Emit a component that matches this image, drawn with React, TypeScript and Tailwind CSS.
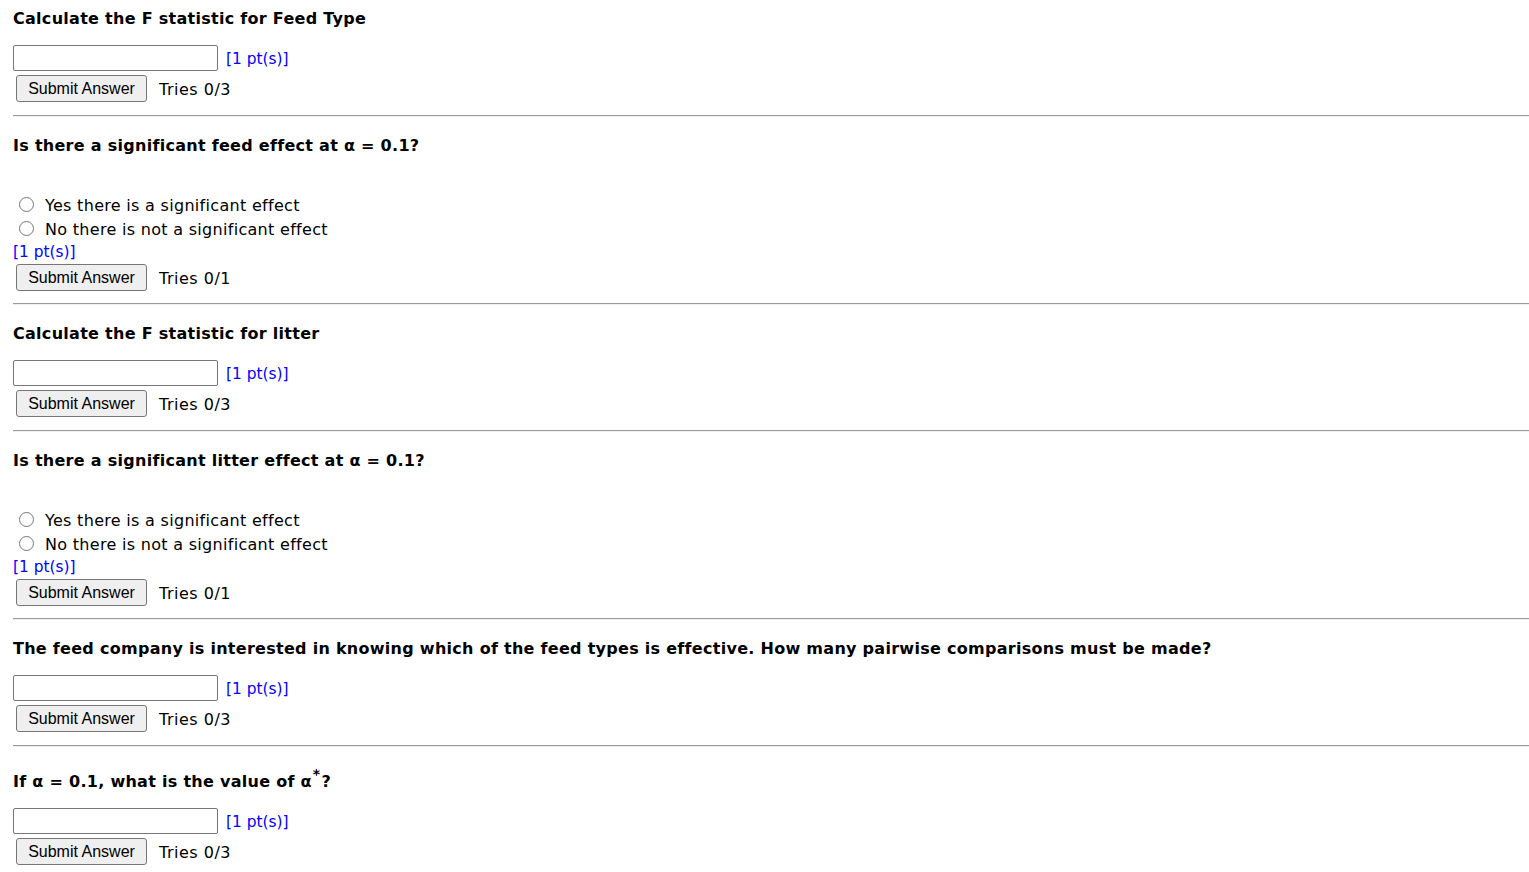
import React from "react";

const font = { fontFamily: '"DejaVu Sans", Verdana, sans-serif' };

function Hr() {
  return <div className="h-[2px] border-t border-b border-t-[#9a9a9a] border-b-[#eeeeee] w-full" />;
}

function Pts({ className = "" }: { className?: string }) {
  return <span className={"relative top-[2px] text-[#0000ff] text-[15.4px] " + className}>[1 pt(s)]</span>;
}

function SubmitRow({ tries, className = "" }: { tries: string; className?: string }) {
  return (
    <div className={"flex items-center h-[27px] " + className}>
      <button
        className="ml-[3px] w-[131px] h-[27px] bg-[#efefef] border border-[#767676] rounded-[3px] text-[16px] text-black flex items-center justify-center"
        style={{ fontFamily: '"Liberation Sans", Arial, sans-serif' }}
      >
        Submit Answer
      </button>
      <span className="relative top-[1px] ml-[12px] text-[16px] tracking-[0.5px] text-black">Tries {tries}</span>
    </div>
  );
}

function InputSection({ title, first = false, mt = "mt-[18px]" }: { title: React.ReactNode; first?: boolean; mt?: string }) {
  return (
    <div>
      <h2 className={(first ? "mt-[8px]" : mt) + " h-[20px] leading-[22px] text-[16px] font-bold tracking-[0.28px] text-black whitespace-nowrap"}>{title}</h2>
      <div className="mt-[17px] flex items-center h-[26px]">
        <input type="text" className="w-[205px] h-[26px] border border-[#767676] rounded-[2px] bg-white" />
        <Pts className="ml-[8px]" />
      </div>
      <SubmitRow tries="0/3" className="mt-[4px]" />
      <div className="mt-[13px]" />
    </div>
  );
}

function Radio({ label }: { label: string }) {
  return (
    <div className="flex items-center h-[24px]">
      <span className="ml-[6px] w-[15px] h-[15px] rounded-full border border-[#767676] bg-white" />
      <span className="relative top-[2px] ml-[11px] text-[16px] tracking-[0.3px] text-black">{label}</span>
    </div>
  );
}

function RadioSection({ title }: { title: string }) {
  return (
    <div>
      <h2 className="mt-[18px] h-[20px] leading-[22px] text-[16px] font-bold tracking-[0.28px] text-black whitespace-nowrap">{title}</h2>
      <div className="mt-[37px]">
        <Radio label="Yes there is a significant effect" />
        <Radio label="No there is not a significant effect" />
      </div>
      <div className="h-[22px] flex items-center">
        <Pts />
      </div>
      <SubmitRow tries="0/1" className="mt-[2px]" />
      <div className="mt-[12px]" />
    </div>
  );
}

export default function App() {
  return (
    <div className="bg-white min-h-screen pl-[13px] pb-[8px]" style={font}>
      <InputSection first title="Calculate the F statistic for Feed Type" />
      <Hr />
      <RadioSection title="Is there a significant feed effect at α = 0.1?" />
      <Hr />
      <InputSection title="Calculate the F statistic for litter" />
      <Hr />
      <RadioSection title="Is there a significant litter effect at α = 0.1?" />
      <Hr />
      <InputSection title="The feed company is interested in knowing which of the feed types is effective. How many pairwise comparisons must be made?" />
      <Hr />
      <InputSection
        mt="mt-[24px]"
        title={
          <>
            If α = 0.1, what is the value of α
            <span className="relative top-[-8px] ml-[1px] mr-[1px] text-[14px] font-bold">*</span>?
          </>
        }
      />
    </div>
  );
}
